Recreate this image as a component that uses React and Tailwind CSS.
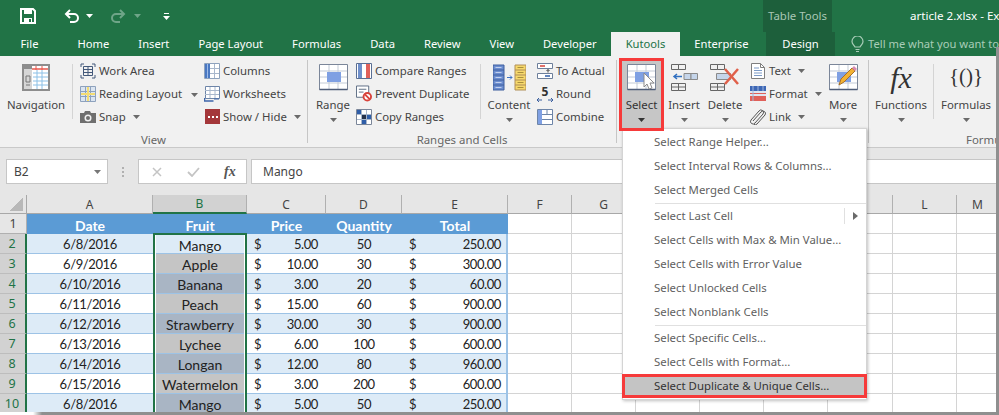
const Caret = ({ color = "#6a6a6a", className = "" }) => (
    <svg width="7" height="4" viewBox="0 0 7 4" className={className}>
        <path d="M0 0h7L3.5 4z" fill={color} />
    </svg>
);

const SaveIcon = () => (
    <svg width="16" height="16" viewBox="0 0 16 16" fill="none">
        <path d="M1 1h12l2 2v12H1z" stroke="#fff" strokeWidth="2" />
        <path d="M4 1h8v5H4z" fill="#fff" />
        <path d="M4 10h8v5H4z" fill="#fff" />
        <path d="M9 11h2v3H9z" fill="#217346" />
    </svg>
);

const UndoIcon = ({ color = "#fff", flip = false }) => (
    <svg width="16" height="14" viewBox="0 0 16 14" fill="none" className={flip ? "-scale-x-100" : ""}>
        <path d="M2 5h8a4 4 0 0 1 0 8H6" stroke={color} strokeWidth="2" />
        <path d="M6 1L2 5l4 4" stroke={color} strokeWidth="2" />
    </svg>
);

const Bulb = () => (
    <svg width="13" height="17" viewBox="0 0 13 17" fill="none" stroke="#a9cdb8" strokeWidth="1.2">
        <path d="M4 11C3 9 1 8 1 5.500a5.500 5.500 0 0 1 11 0C12 8 10 9 9 11z" />
        <path d="M4.500 13.500h4M5 15.500h3" />
    </svg>
);

// white sheet with a blue selected block, used by Range, Select and More
const GridIcon = ({ children }) => (
    <svg width="29" height="27" viewBox="0 0 29 27" fill="none">
        <path d="M.5.5h28v25H.5z" fill="#fff" stroke="#7b8699" />
        <path d="M10 1v24M19 1v24M1 7h27M1 13h27M1 19h27" stroke="#c3cbd6" />
        <path d="M.5 25.500h28" stroke="#4f5d78" strokeWidth="1.500" />
        <path d="M8 8h14v10H8z" fill="#7fa0e3" />
        {children}
    </svg>
);

const NavigationIcon = () => (
    <svg width="28" height="27" viewBox="0 0 28 27" fill="none">
        <path d="M1 1h26v25H1z" fill="#fff" stroke="#8d8d8d" strokeWidth="2" />
        <path d="M2 2h8v23H2z" fill="#d6d6d6" />
        <path d="M2 2h8v3H2z" fill="#8d8d8d" />
        <path d="M10 5h16" stroke="#e8574c" strokeWidth="1.500" />
        <path d="M14 2v4M20 2v4" stroke="#e8574c" />
        <path d="M11 9h15M11 13h15M11 17h15M11 21h15M15 6v19M20 6v19" stroke="#8cc0e6" />
        <path d="M4 12h4v6H4z" stroke="#777" />
        <path d="M4 21h4" stroke="#777" />
    </svg>
);

const WorkAreaIcon = () => (
    <svg width="16" height="16" viewBox="0 0 16 16" fill="none">
        <path d="M1 4V1h3M12 1h3v3M15 12v3h-3M4 15H1v-3" stroke="#43597a" />
        <path d="M3.500 3.500h9v9h-9zM3.500 6.500h9M3.500 9.500h9M8 3.500v9" stroke="#43597a" />
    </svg>
);

const ReadingIcon = () => (
    <svg width="16" height="16" viewBox="0 0 16 16" fill="none">
        <path d="M.5.5h15v15H.5z" fill="#dbe5f1" stroke="#8ea2bd" />
        <path d="M5.500 1v14M10.500 1v14M1 5.500h14M1 10.500h14" stroke="#8ea2bd" />
        <path d="M8 1v14M1 8h14" stroke="#f4dc72" strokeWidth="2" />
    </svg>
);

const CameraIcon = () => (
    <svg width="16" height="14" viewBox="0 0 16 14">
        <path d="M0 3h4l1-2h5l1 2h5v10H0z" fill="#6f6f6f" />
        <circle cx="8" cy="8" r="3.500" fill="#f1f1f1" />
        <circle cx="8" cy="8" r="2" fill="#6f6f6f" />
    </svg>
);

const ColumnsIcon = () => (
    <svg width="16" height="16" viewBox="0 0 16 16" fill="none">
        <path d="M.5.5h15v15H.5z" fill="#fff" stroke="#8ea2bd" />
        <path d="M1 1h5v14H1z" fill="#4a78c2" />
        <path d="M3 1h1v14H3z" fill="#9dbbe8" />
        <path d="M10.500 1v14M6 5.500h9M6 10.500h9" stroke="#a8b7cc" />
    </svg>
);

const WorksheetsIcon = () => (
    <svg width="16" height="16" viewBox="0 0 16 16" fill="none">
        <path d="M1.500.5h14v12h-14z" fill="#fff" stroke="#6d85a8" />
        <path d="M1 4.500h14M1 8.500h14M6 1v11M11 1v11" stroke="#a8b7cc" />
        <path d="M.5 12v3h9" stroke="#3e66ab" strokeWidth="1.500" />
        <path d="M10 13h5" stroke="#3e66ab" />
    </svg>
);

const ShowHideIcon = () => (
    <svg width="15" height="15" viewBox="0 0 15 15">
        <path d="M0 0h15v15H0z" fill="#a4373a" />
        <path d="M3 7h2v2H3zM7 7h2v2H7zM11 7h2v2h-2z" fill="#fff" />
    </svg>
);

const CompareIcon = () => (
    <svg width="16" height="16" viewBox="0 0 16 16" fill="none">
        <path d="M.5.5h15v15H.5z" fill="#fff" stroke="#5a6f93" />
        <path d="M2 1h4v14H2z" fill="#6f8fca" />
        <path d="M10 1h4v14h-4z" fill="#e0605a" />
    </svg>
);

const PreventIcon = () => (
    <svg width="17" height="17" viewBox="0 0 17 17" fill="none">
        <path d="M.5.5h13v12H.5z" fill="#fff" stroke="#58677f" />
        <path d="M3 4h8M3 7h5" stroke="#58677f" />
        <circle cx="12" cy="12" r="4" fill="#fff" stroke="#d9423a" strokeWidth="2" />
        <path d="M9.500 9.500l5 5" stroke="#d9423a" strokeWidth="2" />
    </svg>
);

const CopyRangesIcon = () => (
    <svg width="16" height="16" viewBox="0 0 16 16" fill="none">
        <path d="M.5.5h15v15H.5z" fill="#fff" stroke="#7b8699" />
        <path d="M5.500 1v14M10.500 1v14M1 5.500h14M1 10.500h14" stroke="#a8b7cc" />
        <path d="M1 1h4v4H1zM11 6h4v4h-4zM6 11h4v4H6z" fill="#2f5ea8" />
        <path d="M6 6h4v4H6z" fill="#24324a" />
    </svg>
);

const ContentIcon = () => (
    <svg width="33" height="27" viewBox="0 0 33 27" fill="none">
        <path d="M0 1h11v25H0z" fill="#6c8ed0" stroke="#3f5f9e" />
        <path d="M22 1h11v25H22z" fill="#f6d86b" stroke="#b08f5a" />
        <path d="M0 6h11M0 11h11M0 16h11M0 21h11" stroke="#3f5f9e" />
        <path d="M22 6h11M22 11h11M22 16h11M22 21h11" stroke="#b08f5a" />
        <path d="M2.500 3.500h6M2.500 8.500h6M2.500 13.500h6M2.500 18.500h6M2.500 23.500h6" stroke="#c2d0ee" />
        <path d="M24.500 3.500h6M24.500 8.500h6M24.500 13.500h6M24.500 18.500h6M24.500 23.500h6" stroke="#a98f3c" />
        <path d="M14 13.500h5M17 11.500l2 2-2 2" stroke="#3f73c2" />
    </svg>
);

const ToActualIcon = () => (
    <svg width="16" height="16" viewBox="0 0 16 16" fill="none">
        <path d="M.5.500h15v5H.5zM.5 10.500h15v5H.5z" fill="#fff" stroke="#6d7f9b" />
        <path d="M3 3h5" stroke="#d9423a" strokeWidth="1.500" />
        <path d="M8 13h5" stroke="#2f5ea8" strokeWidth="1.500" />
        <path d="M11 6.500v3M9.500 8L11 6.500 12.500 8" stroke="#444" />
    </svg>
);

const RoundIcon = () => (
    <span className="relative flex h-4 w-4 items-start justify-center text-[12px] leading-[12px] font-bold text-[#333]">
        5
        <svg width="16" height="6" viewBox="0 0 16 6" fill="none" className="absolute bottom-[-1px] left-0">
            <path d="M0 3h5M2 1L0 3l2 2" stroke="#3a5f9e" />
            <path d="M11 3h5M14 1l2 2-2 2" stroke="#3a5f9e" />
        </svg>
    </span>
);

const CombineIcon = () => (
    <svg width="16" height="16" viewBox="0 0 16 16" fill="none">
        <path d="M.5.5h15v15H.5z" fill="#fff" stroke="#6d85a8" />
        <path d="M1 1h4v14H1z" fill="#7fa0e3" />
        <path d="M5 5.500h10M5 10.500h10M10 1v4" stroke="#6d85a8" />
    </svg>
);

const SelectIcon = () => (
    <GridIcon>
        <path d="M17 9l0 14 3-3 2 5 3-1-2-5 4 0z" fill="#fff" stroke="#8b8b8b" />
    </GridIcon>
);

const InsertIcon = () => (
    <svg width="27" height="28" viewBox="0 0 27 28" fill="none">
        <path d="M.5.500h7v5h-7zM7.500.500h7v5h-7zM.5 19.500h7v7h-7zM7.500 19.500h7v7h-7zM.5 23h14" stroke="#666" />
        <path d="M13 9.500h7v6h-7z" fill="#c5d5ea" stroke="#8a8a8a" />
        <path d="M20 9.500h6.500v6H20z" fill="#c5d5ea" stroke="#8a8a8a" />
        <path d="M3 12.500h8M6 10l-3 2.500L6 15" stroke="#2f6fc0" strokeWidth="1.500" />
    </svg>
);

const DeleteIcon = () => (
    <svg width="30" height="28" viewBox="0 0 30 28" fill="none">
        <path d="M.5.500h7v5h-7zM7.500.500h7v5h-7zM.5 19.500h7v7h-7zM7.500 19.500h7v7h-7zM.5 23h14" stroke="#666" />
        <path d="M6.500 9.500h14v6h-14z" fill="#c5d5ea" stroke="#8a8a8a" />
        <path d="M15 5l13 15M28 5L15 20" stroke="#e0604a" strokeWidth="2.500" />
    </svg>
);

const TextIcon = () => (
    <svg width="14" height="16" viewBox="0 0 14 16" fill="none">
        <path d="M.5.500h9l4 4v11H.5z" fill="#fff" stroke="#7e7e7e" />
        <path d="M9.500.500v4h4" stroke="#7e7e7e" />
        <path d="M3 5h5M3 7.500h8M3 10h8M3 12.500h8" stroke="#7c9bc7" />
    </svg>
);

const FormatIcon = () => (
    <svg width="16" height="16" viewBox="0 0 16 16" fill="none">
        <path d="M0 0h16v5H0z" fill="#3d67b5" />
        <path d="M0 5h16v5H0z" fill="#dfe6f2" />
        <path d="M0 10h16v5H0z" fill="#e0605a" />
        <path d="M0 7.500h16" stroke="#e0605a" />
        <path d="M3 0v15M8 0v5M13 0v5" stroke="#9fb6dd" />
    </svg>
);

const LinkIcon = () => (
    <svg width="16" height="16" viewBox="0 0 16 16" fill="none" stroke="#555">
        <path d="M1 11l8-9a2.500 2.500 0 0 1 4 3l-8 9a2.500 2.500 0 0 1-4-3z" />
        <path d="M3 12l8-9a2.500 2.500 0 0 1 4 3l-8 9a2.500 2.500 0 0 1-3 .5" />
    </svg>
);

const MoreIcon = () => (
    <GridIcon>
        <path d="M10 21l2-6L23 4l3 3-11 11z" fill="#f2b233" stroke="#a8702a" />
        <path d="M23 4l2-2 3 3-2 2z" fill="#d98ab0" />
    </GridIcon>
);

const MultiplyIcon = () => (
    <svg width="10" height="10" viewBox="0 0 10 10" fill="none" stroke="#c4c4c4" strokeWidth="1.500">
        <path d="M1 1l8 8M9 1L1 9" />
    </svg>
);

const CheckIcon = () => (
    <svg width="13" height="10" viewBox="0 0 13 10" fill="none" stroke="#c4c4c4" strokeWidth="1.800">
        <path d="M1 5l4 4 7-8" />
    </svg>
);

const Big = ({ icon, label, width, caret = true }) => (
    <div className={`flex shrink-0 flex-col items-center pt-2 ${width}`}>
        <div className="flex h-7 items-start justify-center">{icon}</div>
        <div className="flex h-[26px] items-center whitespace-nowrap">{label}</div>
        {caret && <Caret />}
    </div>
);

const Small = ({ icon, label, caret }) => (
    <div className="flex h-[23px] items-center gap-[3px] whitespace-nowrap">
        <span className="flex w-4 shrink-0 justify-center">{icon}</span>
        <span>{label}</span>
        {caret && <Caret className="ml-1" />}
    </div>
);

const Tab = ({ children, active }) => (
    <div className={`flex h-6 items-center whitespace-nowrap px-[14.500px] ${active ? "bg-[#f1f1f1] text-[#217346]" : "text-white"}`}>{children}</div>
);

const GroupLabel = ({ children, className = "" }) => (
    <div className={`flex h-4 items-center pt-[2px] text-[#666] ${className}`}>{children}</div>
);

const rows = [
    ["6/8/2016", "Mango", "5.00", "50", "250.00"],
    ["6/9/2016", "Apple", "10.00", "30", "300.00"],
    ["6/10/2016", "Banana", "3.00", "20", "60.00"],
    ["6/11/2016", "Peach", "15.00", "60", "900.00"],
    ["6/12/2016", "Strawberry", "30.00", "30", "900.00"],
    ["6/13/2016", "Lychee", "6.00", "100", "600.00"],
    ["6/14/2016", "Longan", "12.00", "80", "960.00"],
    ["6/15/2016", "Watermelon", "3.00", "200", "600.00"],
    ["6/8/2016", "Mango", "5.00", "50", "250.00"],
];

const columns = ["A", "B", "C", "D", "E", "F", "G", "H", "I", "J", "K", "L", "M"];
const emptyCols = ["F", "G", "H", "I", "J", "K", "L", "M"];

const menu = [
    ["Select Range Helper..."],
    ["Select Interval Rows & Columns..."],
    ["Select Merged Cells"],
    null,
    ["Select Last Cell", true],
    ["Select Cells with Max & Min Value..."],
    ["Select Cells with Error Value"],
    ["Select Unlocked Cells"],
    ["Select Nonblank Cells"],
    null,
    ["Select Specific Cells..."],
    ["Select Cells with Format..."],
];

const Row = ({ row, index }) => {
    const num = index + 2;
    const striped = index % 2 === 0;
    const tint = striped ? "bg-[#ddebf7]" : "bg-white";
    let fruitBg = index % 2 === 0 ? "bg-[#a9b5c4]" : "bg-[#c5c5c5]";
    if (index === 0) fruitBg = "bg-[#ddebf7]";
    const blue = "border-b border-[#9dc3e6]";
    // Lato digits run wider than the sheet's, so number cells are tightened
    const digits = "text-[13px] tracking-[-0.4px]";
    return (
        <>
            <div className="flex items-center justify-center border-r-2 border-b border-r-[#217346] border-b-[#bdbdbd] bg-[#d2d2d2] pt-px pr-px text-[12.500px] text-[#217346] font-['Noto_Sans',sans-serif]">{num}</div>
            <div className={`flex items-center justify-center pt-[2px] ${digits} ${tint} ${blue}`}>{row[0]}</div>
            <div className={`border-x-2 border-[#217346] bg-white ${index === 0 ? "border-t-2 -mt-px" : ""}`}>
                <div className={`mx-px flex h-full items-center justify-center pt-[2px] ${fruitBg} ${blue} text-[#222]`}>{row[1]}</div>
            </div>
            <div className={`flex items-center justify-between pt-[2px] pr-2 pl-[7px] ${digits} ${tint} ${blue}`}>
                <span>$</span>
                <span>{row[2]}</span>
            </div>
            <div className={`flex items-center justify-center pt-[2px] ${digits} ${tint} ${blue}`}>{row[3]}</div>
            <div className={`flex items-center justify-between border-r-2 border-r-[#9dc3e6] pt-[2px] pr-[5px] pl-[7px] ${digits} ${tint} ${blue}`}>
                <span>$</span>
                <span>{row[4]}</span>
            </div>
            {emptyCols.map((c) => (
                <div key={c} className="border-r border-b border-[#d4d4d4] bg-white" />
            ))}
        </>
    );
};

const App = () => {
    return (
        <div className="relative h-[415px] w-[999px] overflow-hidden bg-white text-[11.400px] text-[#444] font-['Noto_Sans',sans-serif]">
            {/* title bar */}
            <div className="flex h-8 items-center bg-[#217346] text-white *:shrink-0">
                <div className="ml-[20px]"><SaveIcon /></div>
                <div className="ml-[28px]"><UndoIcon /></div>
                <Caret color="#fff" className="ml-[6px]" />
                <div className="ml-[17px]"><UndoIcon color="#6fa588" flip /></div>
                <Caret color="#6fa588" className="ml-[8px]" />
                <div className="ml-[22px] flex w-[7px] flex-col items-center gap-[2px]">
                    <div className="h-px w-[5px] bg-white" />
                    <Caret color="#fff" />
                </div>
                <div className="ml-[593px] flex h-8 w-[69px] items-center justify-center whitespace-nowrap bg-[#1d5f3b] text-[#a9c7b5]">Table Tools</div>
                <div className="ml-[78px] whitespace-nowrap text-[11.600px]">article 2.xlsx - Excel</div>
            </div>

            {/* tabs */}
            <div className="flex h-6 items-center bg-[#217346] text-[11.200px] *:shrink-0">
                <div className="flex h-6 w-[63px] items-center justify-center pr-1 text-white">File</div>
                {["Home", "Insert", "Page Layout", "Formulas", "Data", "Review", "View", "Developer"].map((t) => (
                    <Tab key={t}>{t}</Tab>
                ))}
                <Tab active>Kutools</Tab>
                <Tab>Enterprise</Tab>
                <div className="ml-[3px] flex h-6 w-[69px] items-center justify-center bg-[#1d5f3b] text-white">Design</div>
                <div className="ml-4 flex items-center gap-1 whitespace-nowrap text-[#a9cdb8]">
                    <Bulb />
                    Tell me what you want to do
                </div>
            </div>

            {/* ribbon */}
            <div className="flex h-[92px] border-b border-[#c9c9c9] bg-[#f1f1f1]">
                <div className="flex w-[307px] shrink-0 flex-col">
                    <div className="flex h-[76px]">
                        <Big icon={<NavigationIcon />} label="Navigation" width="w-[72px]" caret={false} />
                        <div className="mt-2 h-[55px] w-px bg-[#d4d4d4]" />
                        <div className="ml-[7px] w-[124px] pt-[3px]">
                            <Small icon={<WorkAreaIcon />} label="Work Area" />
                            <Small icon={<ReadingIcon />} label={<span>Reading Layout<Caret className="ml-[9px] inline align-middle" /></span>} />
                            <Small icon={<CameraIcon />} label="Snap" caret />
                        </div>
                        <div className="pt-[3px]">
                            <Small icon={<ColumnsIcon />} label="Columns" />
                            <Small icon={<WorksheetsIcon />} label="Worksheets" />
                            <Small icon={<ShowHideIcon />} label="Show / Hide" caret />
                        </div>
                    </div>
                    <GroupLabel className="justify-center">View</GroupLabel>
                </div>
                <div className="mt-1 mb-1 w-px shrink-0 bg-[#c6c6c6]" />

                <div className="flex w-[308px] shrink-0 flex-col">
                    <div className="flex h-[76px]">
                        <div className="ml-[7px]"><Big icon={<GridIcon />} label="Range" width="w-9" /></div>
                        <div className="ml-[5px] w-[124px] pt-[3px]">
                            <Small icon={<CompareIcon />} label="Compare Ranges" />
                            <Small icon={<PreventIcon />} label="Prevent Duplicate" />
                            <Small icon={<CopyRangesIcon />} label="Copy Ranges" />
                        </div>
                        <div className="mt-2 h-[55px] w-px bg-[#d4d4d4]" />
                        <Big icon={<ContentIcon />} label="Content" width="w-14" />
                        <div className="w-[78px] pt-[3px]">
                            <Small icon={<ToActualIcon />} label="To Actual" />
                            <Small icon={<RoundIcon />} label="Round" />
                            <Small icon={<CombineIcon />} label="Combine" />
                        </div>
                    </div>
                    <GroupLabel className="justify-center">Ranges and Cells</GroupLabel>
                </div>
                <div className="mt-1 mb-1 w-px shrink-0 bg-[#c6c6c6]" />

                <div className="flex w-[251px] shrink-0 flex-col">
                    <div className="flex h-[76px]">
                        <div className="relative z-20 mt-[2px] ml-[2px] flex h-[73px] w-[45px] shrink-0 flex-col items-center border-[3px] border-[#f63a3a] bg-[#c6c6c6] pt-[3px] text-[#333]">
                            <div className="flex h-7 items-start"><SelectIcon /></div>
                            <div className="flex h-[26px] items-center">Select</div>
                            <Caret color="#333" />
                        </div>
                        <Big icon={<InsertIcon />} label="Insert" width="w-10" />
                        <Big icon={<DeleteIcon />} label="Delete" width="w-[42px]" />
                        <div className="ml-1 w-[72px] pt-[3px]">
                            <Small icon={<TextIcon />} label="Text" caret />
                            <Small icon={<FormatIcon />} label="Format" caret />
                            <Small icon={<LinkIcon />} label="Link" caret />
                        </div>
                        <Big icon={<MoreIcon />} label="More" width="w-[42px]" />
                    </div>
                </div>
                <div className="mt-1 mb-1 w-px shrink-0 bg-[#c6c6c6]" />

                <div className="flex flex-1 flex-col">
                    <div className="flex h-[76px]">
                        <Big icon={<span className="text-[30px] leading-7 italic text-[#333] font-['Liberation_Serif',serif]">fx</span>} label="Functions" width="w-16" />
                        <div className="mt-2 h-[55px] w-px bg-[#d4d4d4]" />
                        <Big icon={<span className="text-[21px] leading-6 text-[#333] font-['Liberation_Serif',serif]">{"{()}"}</span>} label="Formulas" width="w-16" />
                    </div>
                    <GroupLabel className="pl-[97px] whitespace-nowrap">Formulas</GroupLabel>
                </div>
            </div>

            {/* formula bar */}
            <div className="flex h-[47px] items-start bg-[#e6e6e6] pt-[11px]">
                <div className="ml-[6px] flex h-[25px] w-[102px] items-center justify-between border border-[#c6c6c6] bg-white pt-px pr-[6px] pl-[7px] text-[12px]">
                    B2
                    <Caret color="#777" />
                </div>
                <div className="ml-3 flex h-[25px] w-[6px] flex-col items-center justify-center gap-[2px]">
                    <div className="h-[2px] w-[2px] bg-[#b0b0b0]" />
                    <div className="h-[2px] w-[2px] bg-[#b0b0b0]" />
                    <div className="h-[2px] w-[2px] bg-[#b0b0b0]" />
                </div>
                <div className="ml-3 flex h-[25px] w-[109px] items-center border border-[#c6c6c6] bg-white pl-[13px]">
                    <MultiplyIcon />
                    <span className="ml-[25px]"><CheckIcon /></span>
                    <span className="ml-6 text-[14px] italic font-bold text-[#555] font-['Liberation_Serif',serif]">fx</span>
                </div>
                <div className="ml-1 flex h-[25px] flex-1 items-center border-y border-l border-[#c6c6c6] bg-white pt-px pl-[11px] text-[12px]">Mango</div>
            </div>

            {/* sheet */}
            <div className="grid grid-cols-[27px_126px_94px_79px_76px_106px_64px_64px_64px_64px_64px_65px_64px_42px] grid-rows-[19px_20px_repeat(9,20px)] text-[14px] text-[#222] font-['Lato',sans-serif]">
                <div className="flex items-end justify-end border-r border-b border-[#a8a8a8] bg-[#e6e6e6] pr-[3px] pb-[2px]">
                    <div className="h-[13px] w-[13px] bg-[linear-gradient(135deg,transparent_50%,#b8b8b8_50%)]" />
                </div>
                {columns.map((c) => (
                    <div
                        key={c}
                        className={`flex items-center justify-center border-r border-r-[#b0b0b0] pt-px text-[12px] font-['Noto_Sans',sans-serif] ${c === "B" ? "border-b-2 border-b-[#217346] bg-[#d2d2d2] text-[#217346]" : "border-b border-b-[#a8a8a8] bg-[#e6e6e6] text-[#444]"}`}
                    >
                        {c}
                    </div>
                ))}
                <div className="flex items-center justify-center border-r border-b border-[#b0b0b0] bg-[#e6e6e6] pt-px text-[12.500px] text-[#444] font-['Noto_Sans',sans-serif]">1</div>
                {["Date", "Fruit", "Price", "Quantity", "Total"].map((h) => (
                    <div key={h} className="flex items-center justify-center bg-[#5b9bd5] pt-[2px] font-bold text-white">{h}</div>
                ))}
                {emptyCols.map((c) => (
                    <div key={c} className="border-r border-b border-[#d4d4d4] bg-white" />
                ))}
                {rows.map((r, i) => (
                    <Row key={i} row={r} index={i} />
                ))}
            </div>

            {/* dropdown menu */}
            <div className="absolute top-[128px] left-[622px] z-10 h-[272px] w-[245px] border border-[#d4d4d4] bg-white pt-px text-[11.400px] text-[#5f5f5f] shadow-[1px_1px_3px_rgba(0,0,0,0.25)]">
                {menu.map((m, i) =>
                    m ? (
                        <div key={i} className="relative flex h-6 items-center pl-[31px]">
                            {m[0]}
                            {m[1] && (
                                <div className="absolute top-1 right-2 flex h-4 items-center gap-2 border-l border-[#e0e0e0] pl-2">
                                    <svg width="5" height="8" viewBox="0 0 5 8"><path d="M0 0l5 4-5 4z" fill="#6a6a6a" /></svg>
                                </div>
                            )}
                        </div>
                    ) : (
                        <div key={i} className="ml-[32px] h-[2px] border-b border-[#e0e0e0]" />
                    )
                )}
                <div className="-ml-px flex h-[24px] w-[245px] items-center border-[3px] border-[#f63a3a] bg-[#c4c4c4] pl-[29px] text-[#333]">Select Duplicate &amp; Unique Cells...</div>
            </div>

            {/* window shadow */}
            <div className="absolute top-[47px] right-0 z-30 h-[368px] w-[3px] bg-[#8f8f8f]" />
            <div className="absolute right-0 bottom-0 left-0 z-30 h-[3px] bg-[linear-gradient(90deg,#fff_33px,#8f8f8f_42px)]" />
        </div>
    );
};

export default App;
